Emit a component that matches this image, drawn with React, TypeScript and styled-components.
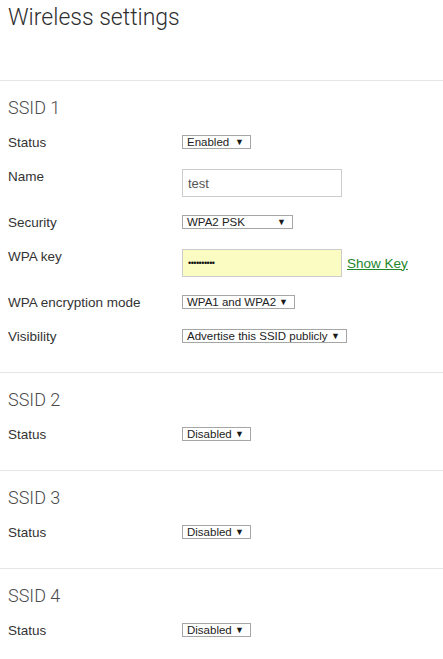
import React from "react";
import styled, { createGlobalStyle } from "styled-components";

const GlobalStyle = createGlobalStyle`
  html, body {
    margin: 0;
    padding: 0;
    background: #fff;
  }
  body {
    font-family: "Liberation Sans", Arial, sans-serif;
    color: #333;
  }
`;

interface Field {
  label: string;
  kind: "select" | "text" | "password";
  value: string;
  width?: number;
  link?: string;
}

interface Ssid {
  name: string;
  fields: Field[];
}

const ssids: Ssid[] = [
  {
    name: "SSID 1",
    fields: [
      { label: "Status", kind: "select", value: "Enabled", width: 69 },
      { label: "Name", kind: "text", value: "test" },
      { label: "Security", kind: "select", value: "WPA2 PSK", width: 111 },
      { label: "WPA key", kind: "password", value: "1234567890", link: "Show Key" },
      { label: "WPA encryption mode", kind: "select", value: "WPA1 and WPA2", width: 113 },
      { label: "Visibility", kind: "select", value: "Advertise this SSID publicly", width: 165 },
    ],
  },
  { name: "SSID 2", fields: [{ label: "Status", kind: "select", value: "Disabled", width: 69 }] },
  { name: "SSID 3", fields: [{ label: "Status", kind: "select", value: "Disabled", width: 69 }] },
  { name: "SSID 4", fields: [{ label: "Status", kind: "select", value: "Disabled", width: 69 }] },
];

function Control({ field }: { field: Field }) {
  if (field.kind === "select") {
    return (
      <Dropdown $width={field.width ?? 69}>
        <span>{field.value}</span>
        <Arrow>▼</Arrow>
      </Dropdown>
    );
  }
  const secret = field.kind === "password";
  return (
    <InputGroup>
      <TextInput
        type={secret ? "password" : "text"}
        defaultValue={field.value}
        $secret={secret}
      />
      {field.link && <KeyLink href="#">{field.link}</KeyLink>}
    </InputGroup>
  );
}

export default function App() {
  return (
    <>
      <GlobalStyle />
      <Page>
        <Header>
          <Title>Wireless settings</Title>
        </Header>
        {ssids.map((ssid) => (
          <Section key={ssid.name}>
            <SectionTitle>{ssid.name}</SectionTitle>
            <Rows>
              {ssid.fields.map((f) => (
                <Row key={f.label}>
                  <Label>{f.label}</Label>
                  <Control field={f} />
                </Row>
              ))}
            </Rows>
          </Section>
        ))}
      </Page>
    </>
  );
}

const Page = styled.div`
  width: 443px;
`;

const Header = styled.header`
  height: 80px;
  padding-left: 8px;
  box-sizing: border-box;
`;

const Title = styled.h1`
  margin: 0;
  font-family: Roboto, "Open Sans", sans-serif;
  font-weight: 300;
  font-size: 23px;
  line-height: 36px;
  color: #2f2f2f;
`;

const Section = styled.section`
  border-top: 1px solid #e6e6e6;
  padding: 15px 0 27px 8px;
`;

const SectionTitle = styled.h2`
  margin: 0 0 15px;
  font-family: Roboto, "Open Sans", sans-serif;
  font-weight: 300;
  font-size: 18px;
  line-height: 24px;
  color: #4a4a4a;
`;

const Rows = styled.div`
  display: flex;
  flex-direction: column;
  gap: 18px;
`;

const Row = styled.div`
  display: flex;
  align-items: flex-start;
  min-height: 16px;
`;

const Label = styled.label`
  width: 174px;
  flex-shrink: 0;
  font-size: 13.5px;
  line-height: 16px;
  color: #333;
`;

const Dropdown = styled.div<{ $width: number }>`
  width: ${({ $width }) => $width}px;
  height: 14px;
  box-sizing: border-box;
  border: 1px solid #a6a6a6;
  display: flex;
  align-items: center;
  justify-content: space-between;
  padding: 0 6px 0 4px;
  font-size: 11.5px;
  line-height: 12px;
  color: #222;
  white-space: nowrap;
`;

const Arrow = styled.span`
  font-size: 9px;
  color: #1a1a1a;
`;

const InputGroup = styled.div`
  display: flex;
  align-items: center;
  gap: 5px;
`;

const TextInput = styled.input<{ $secret?: boolean }>`
  width: 160px;
  height: 28px;
  box-sizing: border-box;
  border: 1px solid #cccccc;
  padding: 0 5px;
  margin: 0;
  font-family: "Liberation Sans", Arial, sans-serif;
  font-size: ${({ $secret }) => ($secret ? "9px" : "13px")};
  letter-spacing: ${({ $secret }) => ($secret ? "-0.5px" : "0")};
  color: ${({ $secret }) => ($secret ? "#111" : "#555")};
  background: ${({ $secret }) => ($secret ? "#fafcc2" : "#fff")};
  outline: none;
`;

const KeyLink = styled.a`
  font-size: 13.5px;
  color: #23862a;
  text-decoration: underline;
`;
